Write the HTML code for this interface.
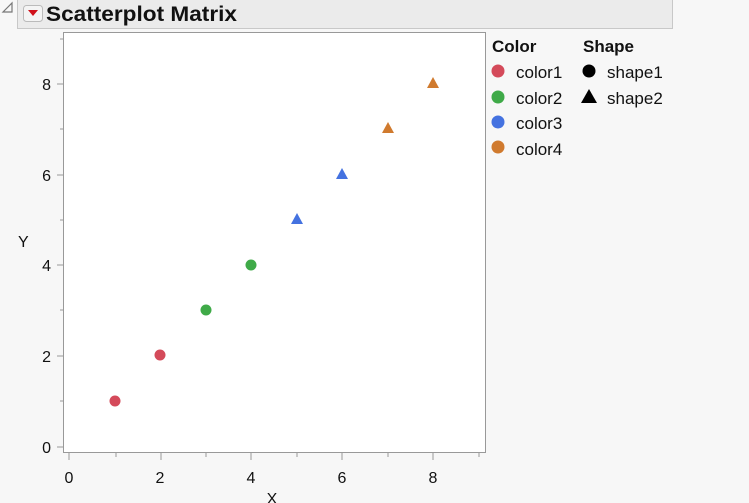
<!DOCTYPE html><html><head><style>body{margin:0;width:749px;height:503px;background:#f7f7f7;overflow:hidden}</style></head><body>
<svg width="749" height="503" xmlns="http://www.w3.org/2000/svg" style="position:absolute;left:0;top:0;font-family:'Liberation Sans',sans-serif">
<rect x="0" y="0" width="749" height="503" fill="#f7f7f7"/>
<rect x="17.5" y="-1" width="655" height="29.5" fill="#ebebeb" stroke="#c8c8c8"/>
<path d="M3 12 L12 3 L12 12 Z" fill="none" stroke="#777" stroke-width="1.2"/>
<rect x="23.5" y="5.5" width="19" height="16" rx="3" fill="#f4f4f4" stroke="#bbb"/>
<path d="M28 10 L38 10 L33 16 Z" fill="#d0101a"/>
<text x="46" y="21" font-size="21" font-weight="bold" fill="#111" textLength="191" lengthAdjust="spacingAndGlyphs">Scatterplot Matrix</text>
<rect x="63.5" y="32.5" width="422" height="420" fill="#fff" stroke="#999"/>
<g stroke="#999">
<line x1="57" y1="84" x2="63" y2="84"/><line x1="57" y1="175" x2="63" y2="175"/><line x1="57" y1="265" x2="63" y2="265"/><line x1="57" y1="356" x2="63" y2="356"/><line x1="57" y1="447" x2="63" y2="447"/>
<line x1="60" y1="39" x2="63" y2="39"/><line x1="60" y1="129" x2="63" y2="129"/><line x1="60" y1="220" x2="63" y2="220"/><line x1="60" y1="310" x2="63" y2="310"/><line x1="60" y1="401" x2="63" y2="401"/>
<line x1="69" y1="453" x2="69" y2="460"/><line x1="161" y1="453" x2="161" y2="460"/><line x1="251" y1="453" x2="251" y2="460"/><line x1="342" y1="453" x2="342" y2="460"/><line x1="433" y1="453" x2="433" y2="460"/>
<line x1="116" y1="453" x2="116" y2="457"/><line x1="206" y1="453" x2="206" y2="457"/><line x1="297" y1="453" x2="297" y2="457"/><line x1="388" y1="453" x2="388" y2="457"/><line x1="479" y1="453" x2="479" y2="457"/>
</g>
<g font-size="16" fill="#111" text-anchor="end">
<text x="51" y="90">8</text><text x="51" y="181">6</text><text x="51" y="271">4</text><text x="51" y="362">2</text><text x="51" y="453">0</text>
</g>
<g font-size="16" fill="#111" text-anchor="middle">
<text x="69" y="483">0</text><text x="160" y="483">2</text><text x="251" y="483">4</text><text x="342" y="483">6</text><text x="433" y="483">8</text>
<text x="272" y="504">X</text>
</g>
<text x="18" y="247" font-size="16" fill="#111">Y</text>
<circle cx="115" cy="401" r="5.5" fill="#d44a5a"/>
<circle cx="160" cy="355" r="5.5" fill="#d44a5a"/>
<circle cx="206" cy="310" r="5.5" fill="#3faa48"/>
<circle cx="251" cy="265" r="5.5" fill="#3faa48"/>
<path d="M297 213 L303 224 L291 224 Z" fill="#4472e0"/>
<path d="M342 168 L348 179 L336 179 Z" fill="#4472e0"/>
<path d="M388 122 L394 133 L382 133 Z" fill="#d07a2e"/>
<path d="M433 77 L439 88 L427 88 Z" fill="#d07a2e"/>
<g font-size="17" fill="#111">
<text x="492" y="52" font-weight="bold">Color</text>
<text x="583" y="52" font-weight="bold">Shape</text>
<text x="516" y="78">color1</text><text x="516" y="104">color2</text><text x="516" y="129">color3</text><text x="516" y="155">color4</text>
<text x="607" y="78">shape1</text><text x="607" y="104">shape2</text>
</g>
<circle cx="498" cy="71" r="6.5" fill="#d44a5a"/>
<circle cx="498" cy="97" r="6.5" fill="#3faa48"/>
<circle cx="498" cy="122" r="6.5" fill="#4472e0"/>
<circle cx="498" cy="147" r="6.5" fill="#d07a2e"/>
<circle cx="589" cy="71" r="6.5" fill="#000"/>
<path d="M589 89 L597 103 L581 103 Z" fill="#000"/>
</svg>
</body></html>
